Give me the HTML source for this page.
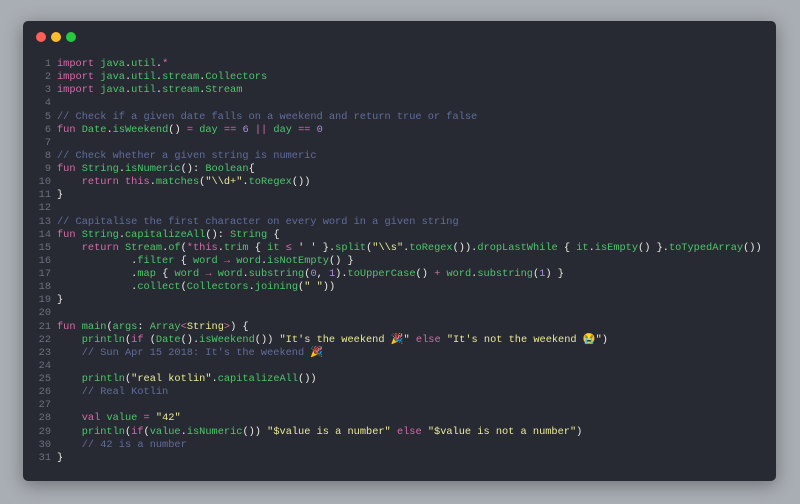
<!DOCTYPE html>
<html><head><meta charset="utf-8"><style>
html,body{margin:0;padding:0;width:800px;height:504px;overflow:hidden;background:#a9aeb4;}
.win{position:absolute;left:23px;top:21px;width:753px;height:460px;background:#282a33;border-radius:5px;box-shadow:0 4px 18px rgba(0,0,0,.35);}
.dot{position:absolute;top:11px;width:10px;height:10px;border-radius:50%;}
pre{position:absolute;left:10px;top:37px;margin:0;font-family:"Liberation Mono","Noto Sans CJK SC",monospace;font-size:10.3px;line-height:13.13px;color:#ecece6;}
.n{color:#6b6e7c;display:inline-block;width:18px;text-align:right;margin-right:6px;}
.k{color:#d66aa9}.g{color:#4cc66a}.y{color:#eaeb98}.c{color:#616c9c}.p{color:#ab8ddd}
</style></head><body>
<div class="win">
<div class="dot" style="left:13px;background:#ff5f56"></div>
<div class="dot" style="left:28px;background:#ffbd2e"></div>
<div class="dot" style="left:43px;background:#27c93f"></div>
<pre><span class="n">1</span><span class="k">import</span> <span class="g">java</span>.<span class="g">util</span>.<span class="k">*</span>
<span class="n">2</span><span class="k">import</span> <span class="g">java</span>.<span class="g">util</span>.<span class="g">stream</span>.<span class="g">Collectors</span>
<span class="n">3</span><span class="k">import</span> <span class="g">java</span>.<span class="g">util</span>.<span class="g">stream</span>.<span class="g">Stream</span>
<span class="n">4</span>
<span class="n">5</span><span class="c">// Check if a given date falls on a weekend and return true or false</span>
<span class="n">6</span><span class="k">fun</span> <span class="g">Date</span>.<span class="g">isWeekend</span>() <span class="k">=</span> <span class="g">day</span> <span class="k">==</span> <span class="p">6</span> <span class="k">||</span> <span class="g">day</span> <span class="k">==</span> <span class="p">0</span>
<span class="n">7</span>
<span class="n">8</span><span class="c">// Check whether a given string is numeric</span>
<span class="n">9</span><span class="k">fun</span> <span class="g">String</span>.<span class="g">isNumeric</span>(): <span class="g">Boolean</span>{
<span class="n">10</span>    <span class="k">return</span> <span class="k">this</span>.<span class="g">matches</span>(<span class="y">"\\d+"</span>.<span class="g">toRegex</span>())
<span class="n">11</span>}
<span class="n">12</span>
<span class="n">13</span><span class="c">// Capitalise the first character on every word in a given string</span>
<span class="n">14</span><span class="k">fun</span> <span class="g">String</span>.<span class="g">capitalizeAll</span>(): <span class="g">String</span> {
<span class="n">15</span>    <span class="k">return</span> <span class="g">Stream</span>.<span class="g">of</span>(<span class="k">*this</span>.<span class="g">trim</span> { <span class="g">it</span> <span class="k">≤</span> <span class="y">' '</span> }.<span class="g">split</span>(<span class="y">"\\s"</span>.<span class="g">toRegex</span>()).<span class="g">dropLastWhile</span> { <span class="g">it</span>.<span class="g">isEmpty</span>() }.<span class="g">toTypedArray</span>())
<span class="n">16</span>            .<span class="g">filter</span> { <span class="g">word</span> <span class="k">→</span> <span class="g">word</span>.<span class="g">isNotEmpty</span>() }
<span class="n">17</span>            .<span class="g">map</span> { <span class="g">word</span> <span class="k">→</span> <span class="g">word</span>.<span class="g">substring</span>(<span class="p">0</span>, <span class="p">1</span>).<span class="g">toUpperCase</span>() <span class="k">+</span> <span class="g">word</span>.<span class="g">substring</span>(<span class="p">1</span>) }
<span class="n">18</span>            .<span class="g">collect</span>(<span class="g">Collectors</span>.<span class="g">joining</span>(<span class="y">" "</span>))
<span class="n">19</span>}
<span class="n">20</span>
<span class="n">21</span><span class="k">fun</span> <span class="g">main</span>(<span class="g">args</span>: <span class="g">Array</span><span class="k">&lt;</span><span class="y">String</span><span class="k">&gt;</span>) {
<span class="n">22</span>    <span class="g">println</span>(<span class="k">if</span> (<span class="g">Date</span>().<span class="g">isWeekend</span>()) <span class="y">"It's the weekend 🎉"</span> <span class="k">else</span> <span class="y">"It's not the weekend 😭"</span>)
<span class="n">23</span>    <span class="c">// Sun Apr 15 2018: It's the weekend 🎉</span>
<span class="n">24</span>
<span class="n">25</span>    <span class="g">println</span>(<span class="y">"real kotlin"</span>.<span class="g">capitalizeAll</span>())
<span class="n">26</span>    <span class="c">// Real Kotlin</span>
<span class="n">27</span>
<span class="n">28</span>    <span class="k">val</span> <span class="g">value</span> <span class="k">=</span> <span class="y">"42"</span>
<span class="n">29</span>    <span class="g">println</span>(<span class="k">if</span>(<span class="g">value</span>.<span class="g">isNumeric</span>()) <span class="y">"$value is a number"</span> <span class="k">else</span> <span class="y">"$value is not a number"</span>)
<span class="n">30</span>    <span class="c">// 42 is a number</span>
<span class="n">31</span>}</pre>
</div>
</body></html>
